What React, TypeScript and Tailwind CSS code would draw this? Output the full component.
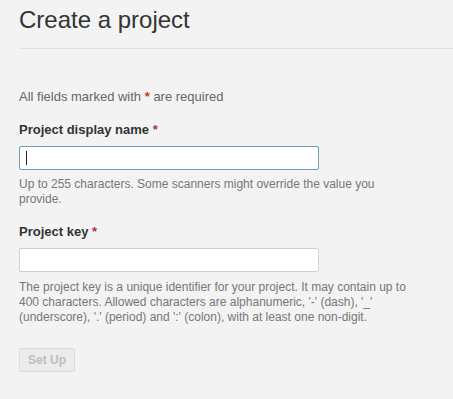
import React from "react";

export default function App() {
  return (
    <div
      className="min-h-[399px] w-full bg-[#f3f3f3] text-[#333]"
      style={{ fontFamily: '"Liberation Sans", Arial, sans-serif' }}
    >
      <div className="pl-[19px]">
        <div className="pt-[4px] pb-[12px] border-b border-[#e1e1e1]">
          <h1 className="text-[24px] leading-[32px] font-normal text-[#333]">Create a project</h1>
        </div>
        <form className="pt-[40px]" onSubmit={(e) => e.preventDefault()}>
          <p className="text-[13px] leading-[16px] text-[#666]">
            All fields marked with <span className="text-[#c0392b] font-bold">*</span> are required
          </p>
          <div className="mt-[17px]">
            <label className="block text-[13px] leading-[16px] font-bold text-[#333]">
              Project display name <span className="text-[#b0333d]">*</span>
            </label>
            <div className="relative mt-[8px] w-[300px]">
              <input
                autoFocus
                type="text"
                className="block w-[300px] h-[24px] bg-white border border-[#6b9fb8] rounded-[2px] px-[6px] text-[13px] outline-none caret-[#222]"
              />
              <span className="pointer-events-none absolute left-[7px] top-[5px] h-[14px] w-px bg-[#222]" />
            </div>
            <p className="mt-[7px] max-w-[395px] text-[12px] leading-[15px] text-[#777]">
              Up to 255 characters. Some scanners might override the value you provide.
            </p>
          </div>
          <div className="mt-[17px]">
            <label className="block text-[13px] leading-[16px] font-bold text-[#333]">
              Project key <span className="text-[#b0333d]">*</span>
            </label>
            <input
              type="text"
              className="mt-[8px] block w-[300px] h-[24px] bg-white border border-[#cfcfcf] rounded-[2px] px-[6px] text-[13px] outline-none"
            />
            <p className="mt-[8px] max-w-[395px] text-[12px] leading-[15px] text-[#777]">
              The project key is a unique identifier for your project. It may contain up to 400 characters. Allowed characters are alphanumeric, '-' (dash), '_' (underscore), '.' (period) and ':' (colon), with at least one non-digit.
            </p>
          </div>
          <button
            type="submit"
            disabled
            className="mt-[23px] h-[24px] w-[56px] bg-[#ececec] border border-[#dcdcdc] rounded-[2px] text-[12px] font-bold text-[#bdbdbd]"
          >
            Set Up
          </button>
        </form>
      </div>
    </div>
  );
}
